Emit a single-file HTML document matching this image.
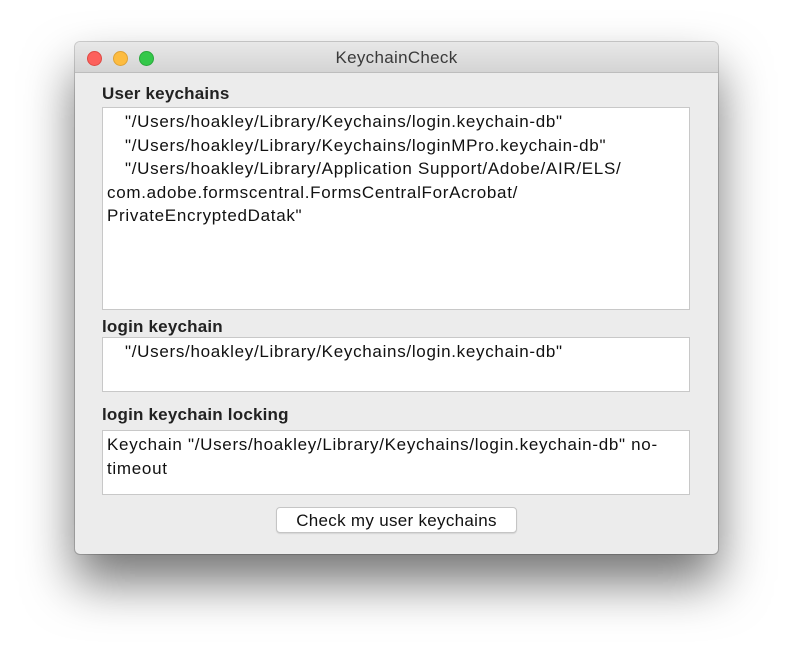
<!DOCTYPE html>
<html><head><style>
body{margin:0;width:793px;height:662px;background:#fff;overflow:hidden;font-family:"Liberation Sans",sans-serif;position:relative}
.win{position:absolute;left:75px;top:42px;width:643px;height:512px;background:#ececec;border-radius:5px;box-shadow:0 28px 50px rgba(0,0,0,.55),0 0 0 1px rgba(0,0,0,.18);overflow:hidden}
.tb{height:30px;background:linear-gradient(#e8e8e8,#d4d4d4);border-bottom:1px solid #bdbdbd;text-align:center;font-size:17px;letter-spacing:.3px;line-height:32px;color:#3a3a3a}
.d{position:absolute;top:9px;width:13px;height:13px;border-radius:50%}
.lbl{position:absolute;left:27px;font-weight:bold;font-size:17px;letter-spacing:.2px;color:#222}
.box{position:absolute;left:27px;width:588px;background:#fff;border:1px solid #c8c8c8;box-sizing:border-box;font-size:17px;letter-spacing:.7px;line-height:23.5px;color:#111;padding:2px 4px;white-space:nowrap}
.ind{display:inline-block;width:18px}
.btn{position:absolute;left:201px;top:465px;width:241px;height:26px;background:#fff;border:1px solid #c5c5c5;border-radius:4px;box-sizing:border-box;text-align:center;font-size:17px;letter-spacing:.3px;line-height:25px;color:#111;box-shadow:0 1px 1px rgba(0,0,0,.1)}
</style></head><body>
<div class="win">
<div class="tb">KeychainCheck</div>
<div class="d" style="left:12px;background:#fc605c;border:.5px solid #de4a44"></div>
<div class="d" style="left:38px;background:#fdbc40;border:.5px solid #dea236"></div>
<div class="d" style="left:64px;background:#34c84a;border:.5px solid #2aa83c"></div>
<div class="lbl" style="top:42px">User keychains</div>
<div class="box" style="top:65px;height:203px"><span class="ind"></span>"/Users/hoakley/Library/Keychains/login.keychain-db"<br><span class="ind"></span>"/Users/hoakley/Library/Keychains/loginMPro.keychain-db"<br><span class="ind"></span>"/Users/hoakley/Library/Application Support/Adobe/AIR/ELS/<br>com.adobe.formscentral.FormsCentralForAcrobat/<br>PrivateEncryptedDatak"</div>
<div class="lbl" style="top:275px">login keychain</div>
<div class="box" style="top:295px;height:55px"><span class="ind"></span>"/Users/hoakley/Library/Keychains/login.keychain-db"</div>
<div class="lbl" style="top:363px">login keychain locking</div>
<div class="box" style="top:388px;height:65px">Keychain "/Users/hoakley/Library/Keychains/login.keychain-db" no-<br>timeout</div>
<div class="btn">Check my user keychains</div>
</div>
</body></html>
